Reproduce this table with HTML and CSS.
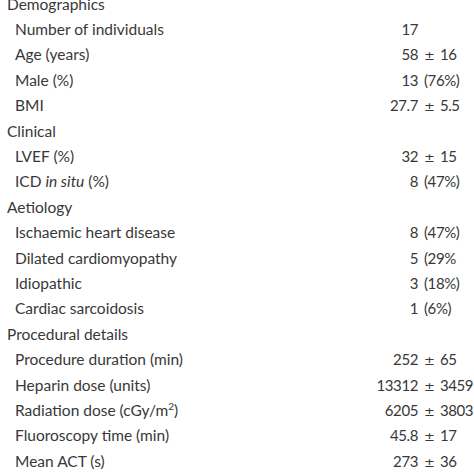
FILE: index.html
```html
<!DOCTYPE html>
<html>
<head>
<meta charset="utf-8">
<link rel="stylesheet" href="styles.css">
</head>
<body>
<div class="table">
  <div class="row head"><span class="label">Demographics</span></div>
  <div class="row"><span class="label">Number of individuals</span><span class="num">17</span><span class="rest"></span></div>
  <div class="row"><span class="label">Age (years)</span><span class="num">58</span><span class="rest"><span class="pm">±</span>16</span></div>
  <div class="row"><span class="label">Male (%)</span><span class="num">13</span><span class="rest">(76%)</span></div>
  <div class="row"><span class="label">BMI</span><span class="num">27.7</span><span class="rest"><span class="pm">±</span>5.5</span></div>
  <div class="row head"><span class="label">Clinical</span></div>
  <div class="row"><span class="label">LVEF (%)</span><span class="num">32</span><span class="rest"><span class="pm">±</span>15</span></div>
  <div class="row"><span class="label">ICD <i>in situ</i> (%)</span><span class="num">8</span><span class="rest">(47%)</span></div>
  <div class="row head"><span class="label">Aetiology</span></div>
  <div class="row"><span class="label">Ischaemic heart disease</span><span class="num">8</span><span class="rest">(47%)</span></div>
  <div class="row"><span class="label">Dilated cardiomyopathy</span><span class="num">5</span><span class="rest">(29%</span></div>
  <div class="row"><span class="label">Idiopathic</span><span class="num">3</span><span class="rest">(18%)</span></div>
  <div class="row"><span class="label">Cardiac sarcoidosis</span><span class="num">1</span><span class="rest">(6%)</span></div>
  <div class="row head"><span class="label">Procedural details</span></div>
  <div class="row"><span class="label">Procedure duration (min)</span><span class="num">252</span><span class="rest"><span class="pm">±</span>65</span></div>
  <div class="row"><span class="label">Heparin dose (units)</span><span class="num">13312</span><span class="rest"><span class="pm">±</span>3459</span></div>
  <div class="row"><span class="label">Radiation dose (cGy/m<sup>2</sup>)</span><span class="num">6205</span><span class="rest"><span class="pm">±</span>3803</span></div>
  <div class="row"><span class="label">Fluoroscopy time (min)</span><span class="num">45.8</span><span class="rest"><span class="pm">±</span>17</span></div>
  <div class="row"><span class="label">Mean ACT (s)</span><span class="num">273</span><span class="rest"><span class="pm">±</span>36</span></div>
</div>
</body>
</html>
```

FILE: styles.css
```css
html, body {
  margin: 0;
  padding: 0;
  background: #ffffff;
  overflow: hidden;
}
body {
  width: 474px;
  height: 474px;
  font-family: "Lato", "Open Sans", sans-serif;
  font-size: 15.5px;
  color: #383838;
}
.table {
  margin-top: -9px;
}
.row {
  display: grid;
  grid-template-columns: 358px 60px 56px;
  height: 25.4px;
  align-items: center;
  white-space: nowrap;
}
.label {
  padding-left: 15px;
}
.head .label {
  padding-left: 7px;
}
.num {
  text-align: right;
  font-size: 15px;
  letter-spacing: -0.4px;
}
.rest {
  padding-left: 6px;
  overflow: visible;
  font-size: 15px;
  letter-spacing: -0.4px;
}
.pm {
  display: inline-block;
  font-family: "DejaVu Sans", sans-serif;
  font-size: 13px;
  letter-spacing: 0;
  margin-right: 5px;
}
sup {
  font-size: 0.65em;
  line-height: 0;
  vertical-align: 0.55em;
}
```
